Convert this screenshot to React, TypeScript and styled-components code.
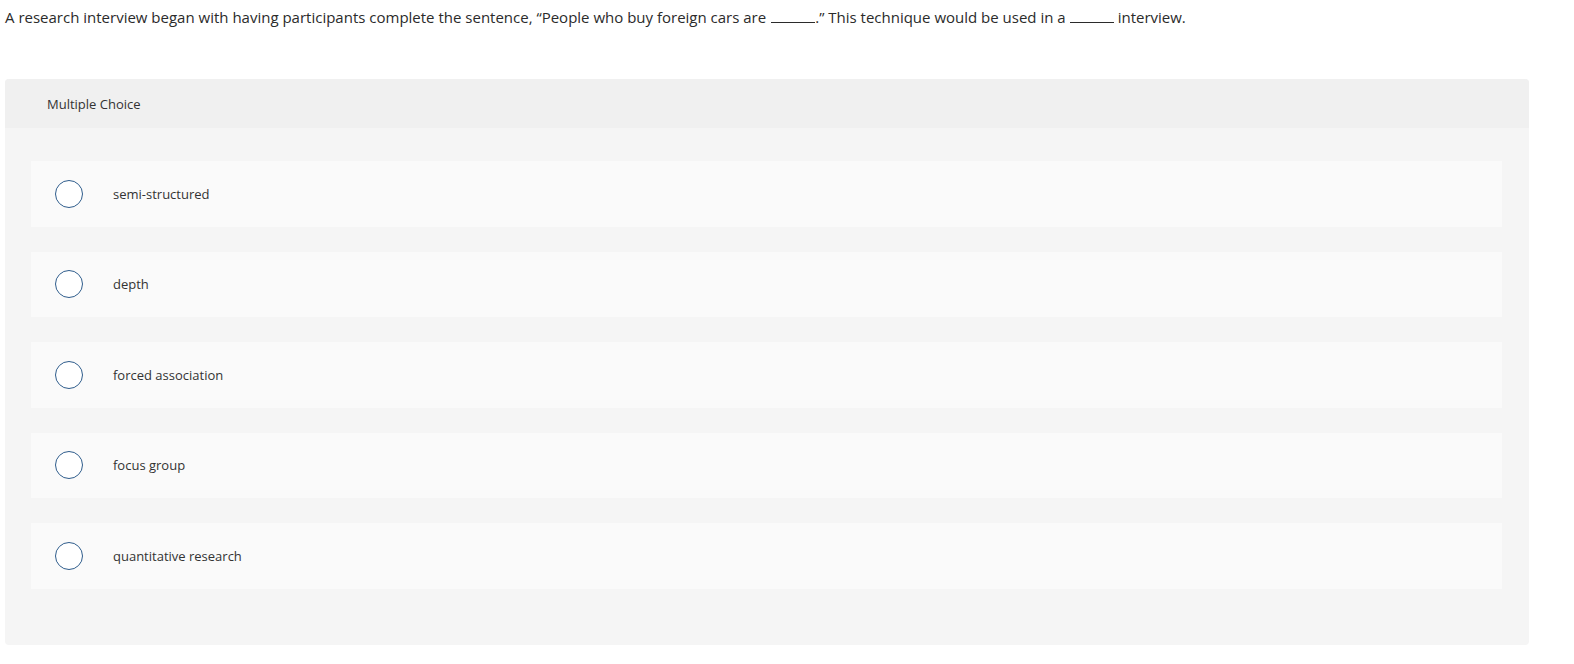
import React, { useState } from "react";
import styled, { createGlobalStyle } from "styled-components";

const GlobalStyle = createGlobalStyle`
  body {
    margin: 0;
    background: #ffffff;
    font-family: "Open Sans", Lato, Arial, sans-serif;
    color: #333333;
  }
`;

const Page = styled.div`
  padding: 7px 45px 0 5px;
`;

const Question = styled.p`
  margin: 0;
  font-size: 15px;
  line-height: 20px;
  color: #2b2b2b;
`;

const Blank = styled.span<{ $after?: boolean }>`
  display: inline-block;
  width: 44px;
  margin: ${(p) => (p.$after ? "0 4px 0 4px" : "0 0 0 5px")};
  border-bottom: 1px solid #2b2b2b;
  vertical-align: baseline;
`;

const Card = styled.div`
  margin-top: 52px;
  border-radius: 4px;
  background: #f5f5f5;
  overflow: hidden;
  padding-bottom: 56px;
`;

const Header = styled.div`
  height: 49px;
  display: flex;
  align-items: center;
  padding-left: 42px;
  background: #f0f0f0;
  font-size: 13px;
  color: #333333;
`;

const List = styled.div`
  display: flex;
  flex-direction: column;
  gap: 25px;
  padding: 33px 27px 0 26px;
`;

const Option = styled.label`
  height: 65.5px;
  display: flex;
  align-items: center;
  background: #fafafa;
  cursor: pointer;
`;

const Radio = styled.span<{ $checked: boolean }>`
  width: 28px;
  height: 28px;
  box-sizing: border-box;
  margin-left: 24px;
  border-radius: 50%;
  border: 1.5px solid #2f5d8c;
  background: ${(p) => (p.$checked ? "#2f5d8c" : "#ffffff")};
  box-shadow: ${(p) => (p.$checked ? "inset 0 0 0 5px #ffffff" : "none")};
  flex-shrink: 0;
`;

const Label = styled.span`
  margin-left: 30px;
  font-size: 13px;
  color: #333333;
`;

const choices = [
  "semi-structured",
  "depth",
  "forced association",
  "focus group",
  "quantitative research",
];

function App() {
  const [picked, setPicked] = useState<number | null>(null);
  return (
    <Page>
      <GlobalStyle />
      <Question>
        A research interview began with having participants complete the
        sentence, “People who buy foreign cars are<Blank />.” This technique
        would be used in a<Blank $after />interview.
      </Question>
      <Card>
        <Header>Multiple Choice</Header>
        <List>
          {choices.map((c, i) => (
            <Option key={c} onClick={() => setPicked(i)}>
              <Radio $checked={picked === i} />
              <Label>{c}</Label>
            </Option>
          ))}
        </List>
      </Card>
    </Page>
  );
}

export default App;
